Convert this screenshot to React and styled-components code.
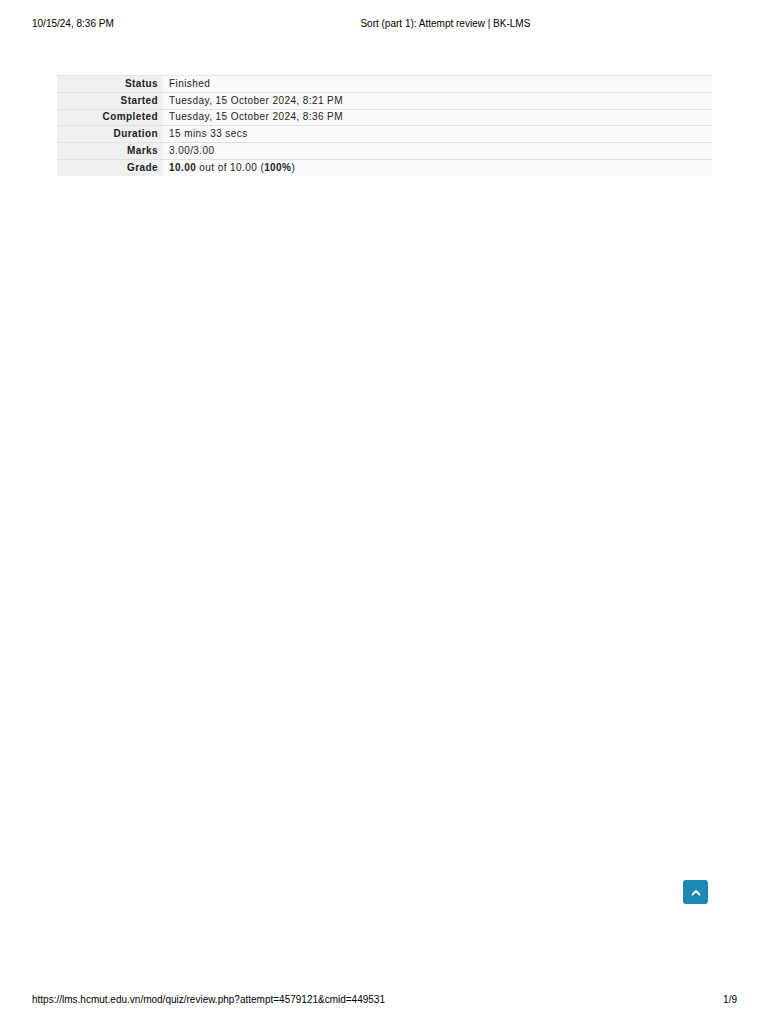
import React from 'react'
import styled, { createGlobalStyle } from 'styled-components'

const GlobalStyle = createGlobalStyle`
  html, body {
    margin: 0;
    padding: 0;
    background: #fff;
  }
  * { box-sizing: border-box; }
`

const rows = [
  { label: 'Status', value: 'Finished' },
  { label: 'Started', value: 'Tuesday, 15 October 2024, 8:21 PM' },
  { label: 'Completed', value: 'Tuesday, 15 October 2024, 8:36 PM' },
  { label: 'Duration', value: '15 mins 33 secs' },
  { label: 'Marks', value: '3.00/3.00' },
  {
    label: 'Grade',
    value: (
      <>
        <b>10.00</b> out of 10.00 (<b>100%</b>)
      </>
    ),
  },
]

const App = () => {
  return (
    <Page>
      <GlobalStyle />
      <Header>
        <span>10/15/24, 8:36 PM</span>
        <Title>Sort (part 1): Attempt review | BK-LMS</Title>
      </Header>
      <Main>
        <Summary>
          <tbody>
            {rows.map((r) => (
              <Row key={r.label}>
                <Label>{r.label}</Label>
                <Cell>{r.value}</Cell>
              </Row>
            ))}
          </tbody>
        </Summary>
        <BackTop aria-label="Back to top">
          <svg width="10" height="7" viewBox="0 0 10 7" fill="none">
            <path d="M1.5 5.5L5 2L8.5 5.5" stroke="#fff" strokeWidth="1.8" strokeLinecap="round" strokeLinejoin="round" />
          </svg>
        </BackTop>
      </Main>
      <Footer>
        <span>https://lms.hcmut.edu.vn/mod/quiz/review.php?attempt=4579121&amp;cmid=449531</span>
        <span>1/9</span>
      </Footer>
    </Page>
  )
}

const Page = styled.div`
  height: 1024px;
  display: flex;
  flex-direction: column;
  overflow: hidden;
`

const Header = styled.div`
  display: flex;
  align-items: center;
  height: 46px;
  padding: 0 31px 0 32px;
  font-family: "Liberation Sans", Arial, sans-serif;
  font-size: 10px;
  color: #000;
`

const Title = styled.span`
  flex: 1;
  text-align: center;
  padding-left: 40px;
`

const Footer = styled.div`
  display: flex;
  justify-content: space-between;
  align-items: flex-start;
  height: 34px;
  padding: 4px 31px 0 32px;
  font-family: "Liberation Sans", Arial, sans-serif;
  font-size: 10px;
  color: #000;
`

const Main = styled.div`
  flex: 1;
  display: flex;
  flex-direction: column;
  padding: 29px 56px 0 57px;
`

const Summary = styled.table`
  width: 655px;
  border-collapse: collapse;
  font-family: "Liberation Sans", Arial, sans-serif;
  font-size: 10px;
  letter-spacing: 0.42px;
  color: #1d2125;
`

const Row = styled.tr`
  height: 16.8px;
  line-height: 14px;
  border-top: 1px solid #dee2e6;
  &:first-child {
    border-top-color: #e6e6e6;
  }
`

const Label = styled.th`
  width: 106px;
  background: #f0f0f0;
  text-align: right;
  font-weight: 700;
  padding: 0 5px 0 0;
  white-space: nowrap;
`

const Cell = styled.td`
  background: #fafafa;
  padding: 0 0 0 6px;
  white-space: nowrap;
  b {
    font-weight: 700;
  }
`

const BackTop = styled.div`
  margin-top: auto;
  margin-bottom: 86px;
  align-self: flex-end;
  margin-right: 4px;
  width: 25px;
  height: 24px;
  border-radius: 3px;
  background: #1b87b5;
  display: flex;
  align-items: center;
  justify-content: center;
`

export default App
